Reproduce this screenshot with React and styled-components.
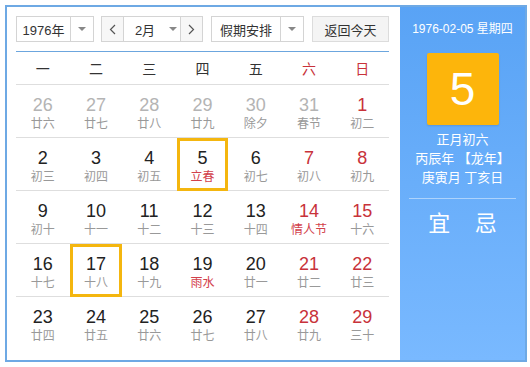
import React from "react";
import styled, { createGlobalStyle } from "styled-components";

const GlobalStyle = createGlobalStyle`
  html, body {
    margin: 0;
    padding: 0;
    background: #fff;
  }
  body {
    font-family: "Liberation Sans", "Noto Sans CJK SC", sans-serif;
  }
`;

// styled-components
const Frame = styled.div`
  margin: 5px 0 0 5px;
  width: 518px;
  height: 353px;
  border: 2px solid #6ea9e4;
  display: flex;
`;
const Main = styled.section`
  width: 373px;
  padding: 9px 11px 0 9px;
`;
const Toolbar = styled.div`
  display: flex;
  height: 26px;
`;
const SelectBox = styled.div`
  display: flex;
  height: 26px;
  box-sizing: border-box;
  border: 1px solid #d4d4d4;
  background: #fff;
  margin-right: ${props => props.gap || 0}px;
`;
const SelectText = styled.div`
  width: ${props => props.w}px;
  display: flex;
  align-items: center;
  justify-content: center;
  font-size: 13px;
  color: #333;
`;
const Caret = styled.div`
  width: ${props => props.w || 22}px;
  display: flex;
  align-items: center;
  justify-content: center;
  border-left: ${props => (props.divider ? "1px solid #d4d4d4" : "none")};
  &::before {
    content: "";
    border-left: 4px solid transparent;
    border-right: 4px solid transparent;
    border-top: 4px solid #888;
  }
`;
const StepButton = styled.div`
  width: 21px;
  display: flex;
  align-items: center;
  justify-content: center;
  background: #f7f7f7;
  border-left: ${props => (props.side === "right" ? "1px solid #d4d4d4" : "none")};
  border-right: ${props => (props.side === "left" ? "1px solid #d4d4d4" : "none")};
`;
const TodayButton = styled.div`
  width: 80px;
  height: 26px;
  box-sizing: border-box;
  border: 1px solid #dcdcdc;
  background: #f4f4f4;
  display: flex;
  align-items: center;
  justify-content: center;
  font-size: 13px;
  color: #333;
`;
const WeekHeader = styled.div`
  margin-top: 9px;
  display: grid;
  grid-template-columns: repeat(7, 1fr);
  height: 32px;
  border-top: 1px solid #6ca6de;
  border-bottom: 1px solid #dedede;
`;
const WeekDay = styled.div`
  display: flex;
  align-items: center;
  justify-content: center;
  font-size: 14px;
  color: ${props => (props.weekend ? "#c8323a" : "#333")};
`;
const Row = styled.div`
  display: grid;
  grid-template-columns: repeat(7, 1fr);
  height: 52px;
  border-bottom: ${props => (props.last ? "none" : "1px solid #dedede")};
`;
const Cell = styled.div`
  position: relative;
  display: flex;
  flex-direction: column;
  align-items: center;
  padding-top: 10px;
  box-sizing: border-box;
  ${props =>
    props.selected &&
    `
    &::after {
      content: "";
      position: absolute;
      left: 1px;
      right: 1px;
      top: 0;
      bottom: -1px;
      border: 3px solid #f4b60f;
    }
  `}
`;
const DayNum = styled.div`
  font-size: 18px;
  line-height: 20px;
  color: ${props => (props.faded ? "#b4b4b4" : props.red ? "#c8323a" : "#222")};
`;
const Lunar = styled.div`
  margin-top: 1px;
  font-size: 12px;
  line-height: 16px;
  color: ${props => (props.red ? "#d2414b" : "#999")};
`;
const Side = styled.aside`
  width: 125px;
  background: linear-gradient(#59a3f5, #79b9ff);
  display: flex;
  flex-direction: column;
  align-items: center;
  color: #fff;
`;
const SideDate = styled.div`
  margin-top: 14px;
  font-size: 12px;
  line-height: 16px;
`;
const BigDay = styled.div`
  margin-top: 16px;
  width: 72px;
  height: 72px;
  background: #fdb50b;
  border-radius: 2px;
  display: flex;
  align-items: center;
  justify-content: center;
  font-size: 46px;
  box-shadow: 0 1px 2px rgba(0, 0, 0, 0.12);
`;
const SideLines = styled.div`
  margin-top: 5px;
  font-size: 13px;
  line-height: 19px;
  text-align: center;
`;
const SideRule = styled.div`
  margin-top: 11px;
  width: 107px;
  height: 1px;
  background: rgba(255, 255, 255, 0.45);
`;
const Advice = styled.div`
  margin-top: 10px;
  width: 100%;
  display: flex;
  justify-content: space-around;
  padding: 0 16px;
  box-sizing: border-box;
  font-size: 22px;
  line-height: 30px;
`;

const Chevron = ({ dir }) => (
  <svg width="7" height="11" viewBox="0 0 7 11">
    <path
      d={dir === "left" ? "M6 1 L1.5 5.5 L6 10" : "M1 1 L5.5 5.5 L1 10"}
      fill="none"
      stroke="#555"
      strokeWidth="1.2"
    />
  </svg>
);

const weekDays = ["一", "二", "三", "四", "五", "六", "日"];

const weeks = [
  [
    [26, "廿六", "f"], [27, "廿七", "f"], [28, "廿八", "f"], [29, "廿九", "f"],
    [30, "除夕", "f"], [31, "春节", "f"], [1, "初二"],
  ],
  [
    [2, "初三"], [3, "初四"], [4, "初五"], [5, "立春", "s"],
    [6, "初七"], [7, "初八"], [8, "初九"],
  ],
  [
    [9, "初十"], [10, "十一"], [11, "十二"], [12, "十三"],
    [13, "十四"], [14, "情人节", "h"], [15, "十六"],
  ],
  [
    [16, "十七"], [17, "十八", "t"], [18, "十九"], [19, "雨水", "h"],
    [20, "廿一"], [21, "廿二"], [22, "廿三"],
  ],
  [
    [23, "廿四"], [24, "廿五"], [25, "廿六"], [26, "廿七"],
    [27, "廿八"], [28, "廿九"], [29, "三十"],
  ],
];

const App = () => (
  <>
    <GlobalStyle />
    <Frame>
      <Main>
        <Toolbar>
          <SelectBox gap={7}>
            <SelectText w={53}>1976年</SelectText>
            <Caret w={22} divider />
          </SelectBox>
          <SelectBox gap={8}>
            <StepButton side="left">
              <Chevron dir="left" />
            </StepButton>
            <SelectText w={42}>2月</SelectText>
            <Caret w={14} />
            <StepButton side="right">
              <Chevron dir="right" />
            </StepButton>
          </SelectBox>
          <SelectBox gap={8}>
            <SelectText w={68}>假期安排</SelectText>
            <Caret w={22} divider />
          </SelectBox>
          <TodayButton>返回今天</TodayButton>
        </Toolbar>
        <WeekHeader>
          {weekDays.map((d, i) => (
            <WeekDay key={d} weekend={i >= 5}>
              {d}
            </WeekDay>
          ))}
        </WeekHeader>
        {weeks.map((week, wi) => (
          <Row key={wi} last={wi === weeks.length - 1}>
            {week.map(([num, lunar, flag], di) => (
              <Cell key={di} selected={flag === "s" || flag === "t"}>
                <DayNum faded={flag === "f"} red={di >= 5}>
                  {num}
                </DayNum>
                <Lunar red={flag === "s" || flag === "h"}>{lunar}</Lunar>
              </Cell>
            ))}
          </Row>
        ))}
      </Main>
      <Side>
        <SideDate>1976-02-05 星期四</SideDate>
        <BigDay>5</BigDay>
        <SideLines>
          <div>正月初六</div>
          <div>丙辰年 【龙年】</div>
          <div>庚寅月 丁亥日</div>
        </SideLines>
        <SideRule />
        <Advice>
          <span>宜</span>
          <span>忌</span>
        </Advice>
      </Side>
    </Frame>
  </>
);

export default App;
